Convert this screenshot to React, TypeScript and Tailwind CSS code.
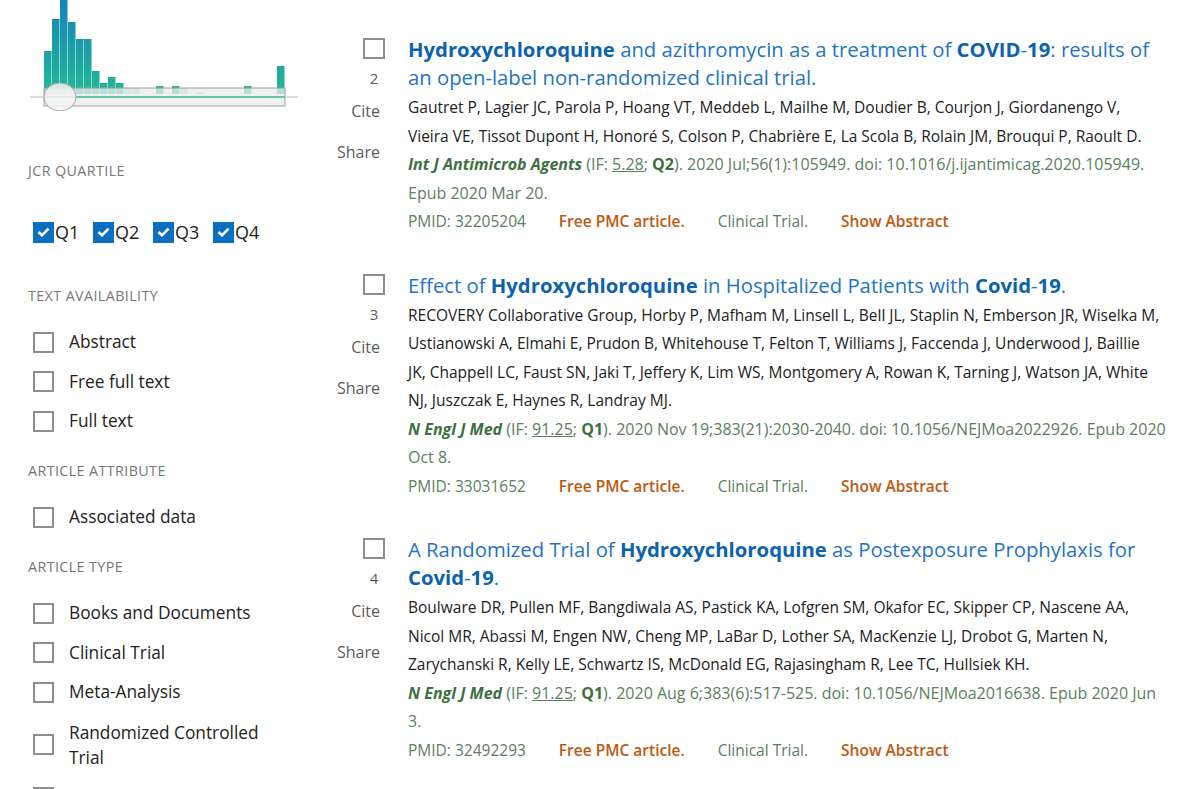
import React from 'react';

const font = "font-['Open_Sans','Noto_Sans',sans-serif]";

type Line = React.ReactNode;

interface Article {
  n: number;
  pmid: string;
  title: Line[];
  authors: Line[];
  cite: Line[];
}

const B = ({ children }: { children: React.ReactNode }) => (
  <b className="font-bold text-[#0b62ad]">{children}</b>
);

const J = ({ name, ifv, q }: { name: string; ifv: string; q: string }) => (
  <>
    <b className="font-bold italic text-[#3e7043]">{name}</b> (IF: <span className="underline">{ifv}</span>;{' '}
    <b className="font-bold text-[#3e7043]">{q}</b>).
  </>
);

const articles: Article[] = [
  {
    n: 2,
    pmid: '32205204',
    title: [
      <>
        <B>Hydroxychloroquine</B> and azithromycin as a treatment of <B>COVID</B>-<B>19</B>: results of
      </>,
      <>an open-label non-randomized clinical trial.</>,
    ],
    authors: [
      'Gautret P, Lagier JC, Parola P, Hoang VT, Meddeb L, Mailhe M, Doudier B, Courjon J, Giordanengo V,',
      'Vieira VE, Tissot Dupont H, Honoré S, Colson P, Chabrière E, La Scola B, Rolain JM, Brouqui P, Raoult D.',
    ],
    cite: [
      <>
        <J name="Int J Antimicrob Agents" ifv="5.28" q="Q2" /> 2020 Jul;56(1):105949. doi: 10.1016/j.ijantimicag.2020.105949.
      </>,
      'Epub 2020 Mar 20.',
    ],
  },
  {
    n: 3,
    pmid: '33031652',
    title: [
      <>
        Effect of <B>Hydroxychloroquine</B> in Hospitalized Patients with <B>Covid</B>-<B>19</B>.
      </>,
    ],
    authors: [
      'RECOVERY Collaborative Group, Horby P, Mafham M, Linsell L, Bell JL, Staplin N, Emberson JR, Wiselka M,',
      'Ustianowski A, Elmahi E, Prudon B, Whitehouse T, Felton T, Williams J, Faccenda J, Underwood J, Baillie',
      'JK, Chappell LC, Faust SN, Jaki T, Jeffery K, Lim WS, Montgomery A, Rowan K, Tarning J, Watson JA, White',
      'NJ, Juszczak E, Haynes R, Landray MJ.',
    ],
    cite: [
      <>
        <J name="N Engl J Med" ifv="91.25" q="Q1" /> 2020 Nov 19;383(21):2030-2040. doi: 10.1056/NEJMoa2022926. Epub 2020
      </>,
      'Oct 8.',
    ],
  },
  {
    n: 4,
    pmid: '32492293',
    title: [
      <>
        A Randomized Trial of <B>Hydroxychloroquine</B> as Postexposure Prophylaxis for
      </>,
      <>
        <B>Covid</B>-<B>19</B>.
      </>,
    ],
    authors: [
      'Boulware DR, Pullen MF, Bangdiwala AS, Pastick KA, Lofgren SM, Okafor EC, Skipper CP, Nascene AA,',
      'Nicol MR, Abassi M, Engen NW, Cheng MP, LaBar D, Lother SA, MacKenzie LJ, Drobot G, Marten N,',
      'Zarychanski R, Kelly LE, Schwartz IS, McDonald EG, Rajasingham R, Lee TC, Hullsiek KH.',
    ],
    cite: [
      <>
        <J name="N Engl J Med" ifv="91.25" q="Q1" /> 2020 Aug 6;383(6):517-525. doi: 10.1056/NEJMoa2016638. Epub 2020 Jun
      </>,
      '3.',
    ],
  },
];

// year histogram bars: [x, top, kind]
const bars: [number, number, 'g' | 'l'][] = [
  [44, 51, 'g'], [52, 19, 'g'], [60, 0, 'g'], [68, 22, 'g'], [76, 39, 'g'], [84, 39, 'g'],
  [92, 71, 'g'], [100, 83, 'g'], [108, 77, 'g'], [116, 83, 'g'], [124, 88, 'l'], [132, 88, 'l'],
  [156, 86, 'g'], [172, 86, 'g'], [180, 88, 'l'], [196, 92, 'l'], [244, 86, 'g'], [277, 66, 'g'],
];

const Histogram = () => (
  <svg width="300" height="115" viewBox="0 0 300 115" className="block">
    <defs>
      <linearGradient id="bg" x1="0" y1="0" x2="0" y2="94" gradientUnits="userSpaceOnUse">
        <stop offset="0" stopColor="#1683b8" />
        <stop offset="1" stopColor="#22b996" />
      </linearGradient>
      <clipPath id="cut">
        <rect x="0" y="0" width="300" height="111" />
      </clipPath>
    </defs>
    {bars.map(([x, top, k]) => (
      <rect
        key={x}
        x={x}
        y={top}
        width={7.5}
        height={94 - top}
        fill={k === 'g' ? 'url(#bg)' : '#9fd9c9'}
      />
    ))}
    <rect x="44" y="88" width="241" height="18" fill="#eaeaea" fillOpacity="0.75" stroke="#a0a0a0" strokeWidth="1" />
    <line x1="30" y1="97" x2="298" y2="97" stroke="#dcdcdc" strokeWidth="2" />
    <line x1="44" y1="97" x2="285" y2="97" stroke="#3cb99a" strokeWidth="1.5" />
    <g clipPath="url(#cut)">
      <ellipse cx="60" cy="97" rx="16" ry="14" fill="#f3f3f3" fillOpacity="0.85" stroke="#a8a8a8" strokeWidth="1" />
    </g>
  </svg>
);

const Box = () => <span className="block w-[21px] h-[21px] shrink-0 border-2 border-[#8e8e8e] bg-white" />;

const Check = ({ label }: { label: string }) => (
  <div className="flex items-center gap-[15px] pl-[5px] text-[17.3px] leading-[24px] text-[#222]">
    <Box />
    <span>{label}</span>
  </div>
);

const Heading = ({ children, className = '' }: { children: React.ReactNode; className?: string }) => (
  <div className={`text-[14.3px] leading-[20px] tracking-[0.4px] text-[#777] ${className}`}>{children}</div>
);

const Quartile = ({ q }: { q: string }) => (
  <div className="flex items-center gap-[1px] w-[60px]">
    <span className="flex items-center justify-center w-[21px] h-[21px] bg-[#0b6ebf]">
      <svg width="13" height="10" viewBox="0 0 13 10">
        <path d="M1.5 5 L5 8.3 L11.5 1.7" fill="none" stroke="white" strokeWidth="2.6" />
      </svg>
    </span>
    <span className="text-[18px] leading-[24px] text-[#222]">{q}</span>
  </div>
);

const Sidebar = () => (
  <aside className="w-[338px] shrink-0 pl-[28px]">
    <div className="-ml-[28px]">
      <Histogram />
    </div>
    <Heading className="mt-[46px]">JCR QUARTILE</Heading>
    <div className="flex mt-[39px] pl-[5px]">
      {['Q1', 'Q2', 'Q3', 'Q4'].map((q) => (
        <Quartile key={q} q={q} />
      ))}
    </div>
    <Heading className="mt-[42px]">TEXT AVAILABILITY</Heading>
    <div className="flex flex-col gap-[15.5px] mt-[24px]">
      <Check label="Abstract" />
      <Check label="Free full text" />
      <Check label="Full text" />
    </div>
    <Heading className="mt-[28px]">ARTICLE ATTRIBUTE</Heading>
    <div className="flex flex-col gap-[15.5px] mt-[24px]">
      <Check label="Associated data" />
    </div>
    <Heading className="mt-[28px]">ARTICLE TYPE</Heading>
    <div className="flex flex-col gap-[15.5px] mt-[24px]">
      <Check label="Books and Documents" />
      <Check label="Clinical Trial" />
      <Check label="Meta-Analysis" />
      <div className="flex items-center gap-[15px] pl-[5px] text-[17.3px] leading-[25px] text-[#222]">
        <Box />
        <span>
          Randomized Controlled
          <br />
          Trial
        </span>
      </div>
      <Check label="Review" />
    </div>
  </aside>
);

const ArticleRow = ({ a }: { a: Article }) => (
  <article className="flex">
    <div className="w-[47px] shrink-0 flex flex-col items-end text-[#5b5b5b]">
      <span className="mt-[3px] block w-[22px] h-[21px] border-2 border-[#8e8e8e]" />
      <span className="mt-[9px] w-[22px] text-center text-[15px] leading-[20px]">{a.n}</span>
      <span className="mt-[11px] pr-[5px] text-[16px] leading-[24px]">Cite</span>
      <span className="mt-[17px] pr-[5px] text-[16px] leading-[24px]">Share</span>
    </div>
    <div className="ml-[23px] flex-1 min-w-0">
      <div className="text-[20.3px] leading-[28px] text-[#1f74c4]">
        {a.title.map((l, i) => (
          <div key={i} className="whitespace-nowrap">
            {l}
          </div>
        ))}
      </div>
      <div className="mt-[2px] text-[15.5px] leading-[28.5px]">
        {a.authors.map((l, i) => (
          <div key={i} className="whitespace-nowrap text-[#222]">
            {l}
          </div>
        ))}
        {a.cite.map((l, i) => (
          <div key={i} className="whitespace-nowrap text-[16px] text-[#5a805e]">
            {l}
          </div>
        ))}
        <div className="flex gap-[33px] whitespace-nowrap">
          <span className="text-[#5a805e]">PMID: {a.pmid}</span>
          <span className="font-semibold text-[#c0580f]">Free PMC article.</span>
          <span className="text-[#5a805e]">Clinical Trial.</span>
          <span className="font-semibold text-[#c0580f]">Show Abstract</span>
        </div>
      </div>
    </div>
  </article>
);

export default function App() {
  return (
    <div className={`flex w-[1200px] h-[789px] overflow-hidden bg-white ${font}`}>
      <Sidebar />
      <main className="flex-1 min-w-0 pt-[35px] flex flex-col gap-[35px]">
        {articles.map((a) => (
          <ArticleRow key={a.n} a={a} />
        ))}
      </main>
    </div>
  );
}
